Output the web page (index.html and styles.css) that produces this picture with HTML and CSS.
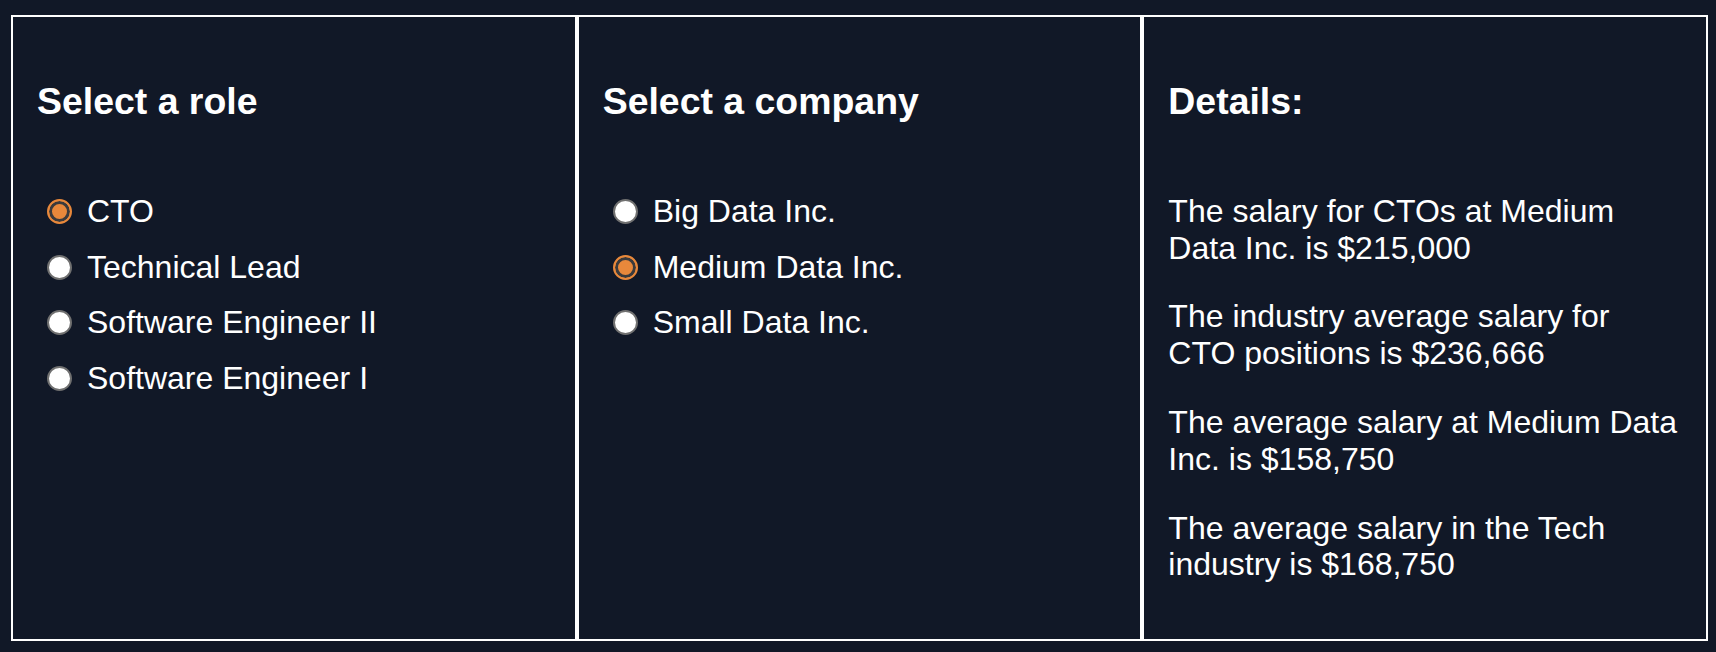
FILE: index.html
```html
<!DOCTYPE html>
<html lang="en">
<head>
<meta charset="utf-8">
<title>Salary explorer</title>
<link rel="stylesheet" href="styles.css">
</head>
<body>
<main class="board">
  <section class="panel">
    <h3 class="panel-title">Select a role</h3>
    <div class="options">
      <label class="option"><input type="radio" name="role" checked><span>CTO</span></label>
      <label class="option"><input type="radio" name="role"><span>Technical Lead</span></label>
      <label class="option"><input type="radio" name="role"><span>Software Engineer II</span></label>
      <label class="option"><input type="radio" name="role"><span>Software Engineer I</span></label>
    </div>
  </section>
  <section class="panel">
    <h3 class="panel-title">Select a company</h3>
    <div class="options">
      <label class="option"><input type="radio" name="company"><span>Big Data Inc.</span></label>
      <label class="option"><input type="radio" name="company" checked><span>Medium Data Inc.</span></label>
      <label class="option"><input type="radio" name="company"><span>Small Data Inc.</span></label>
    </div>
  </section>
  <section class="panel">
    <h3 class="panel-title">Details:</h3>
    <div class="details">
      <p>The salary for CTOs at Medium Data Inc. is $215,000</p>
      <p>The industry average salary for CTO positions is $236,666</p>
      <p>The average salary at Medium Data Inc. is $158,750</p>
      <p>The average salary in the Tech industry is $168,750</p>
    </div>
  </section>
</main>
</body>
</html>
```
FILE: styles.css
```css
html, body {
  margin: 0;
  padding: 0;
  background: #111827;
}

body {
  font-family: "Liberation Sans", Arial, Helvetica, sans-serif;
  font-size: 32px;
  color: #ffffff;
}

.board {
  display: flex;
  height: 626px;
  margin: 15px 8px 0 11px;
}

.panel {
  flex: 1 1 0;
  min-width: 0;
  box-sizing: border-box;
  border: 2px solid #ffffff;
  padding: 26px 24px 24px;
  display: flex;
  flex-direction: column;
}

.panel-title {
  font-size: 37.44px;
  font-weight: bold;
  line-height: 43px;
  margin: 37.44px 0;
}

.options {
  display: flex;
  flex-direction: column;
  gap: 19px;
  margin-top: 32px;
}

.option {
  display: flex;
  align-items: center;
  line-height: 36.8px;
}

.option input {
  appearance: none;
  -webkit-appearance: none;
  width: 25px;
  height: 25px;
  margin: 0 15px 0 10px;
  box-sizing: border-box;
  border-radius: 50%;
  border: 2px solid #707070;
  background: #ffffff;
  flex: none;
}

.option input:checked {
  border: 2.5px solid #e8883b;
  background: #e8883b;
  box-shadow: inset 0 0 0 3px #3a3a3c;
}

.details {
  display: flex;
  flex-direction: column;
  gap: 32px;
  margin-top: 32px;
}

.details p {
  margin: 0;
  line-height: 36.8px;
}
```
